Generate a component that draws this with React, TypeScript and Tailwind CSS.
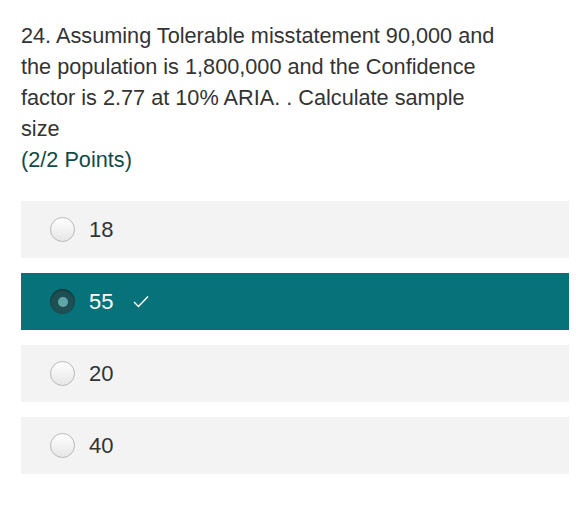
import { useState } from "react";

const options = ["18", "55", "20", "40"];

function Radio({ checked }: { checked: boolean }) {
	if (checked) {
		return (
			<span className="flex h-[25px] w-[25px] shrink-0 items-center justify-center rounded-full bg-[#1d4f53] shadow-[inset_0_1px_2px_rgba(0,0,0,0.4)]">
				<span className="h-[10px] w-[10px] rounded-full bg-[#62a7a8]" />
			</span>
		);
	}
	return (
		<span className="h-[25px] w-[25px] shrink-0 rounded-full border border-[#b9b9b9] bg-gradient-to-b from-white to-[#e6e6e6]" />
	);
}

function App() {
	const [selected] = useState(1);

	return (
		<div className="min-h-screen bg-white font-['Liberation_Sans',Arial,sans-serif]">
			<div className="pl-[21px] pr-[12px] pt-[20px]">
				<div className="w-[485px] text-[21.7px] leading-[31px] text-[#333333]">
					24. Assuming Tolerable misstatement 90,000 and the population is 1,800,000 and the Confidence
					factor is 2.77 at 10% ARIA. . Calculate sample size
				</div>
				<div className="text-[21.7px] leading-[31px] text-[#134a47]">(2/2 Points)</div>
				<div className="mt-[26px] flex flex-col gap-[15px]">
					{options.map((o, i) => {
						const on = i === selected;
						return (
							<div
								key={o}
								className={
									on
										? "flex h-[57px] items-center gap-[14px] bg-[#08727a] pl-[29px] text-white"
										: "flex h-[57px] items-center gap-[14px] bg-[#f3f3f3] pl-[29px] text-[#333333]"
								}
							>
								<Radio checked={on} />
								<span className="text-[22px]">{o}</span>
								{on && (
									<svg width="16" height="13" viewBox="0 0 16 13" className="ml-[6px]">
										<path d="M1 7 L5.5 11.5 L15 1.5" fill="none" stroke="white" strokeWidth="1.4" />
									</svg>
								)}
							</div>
						);
					})}
				</div>
			</div>
		</div>
	);
}

export default App;
